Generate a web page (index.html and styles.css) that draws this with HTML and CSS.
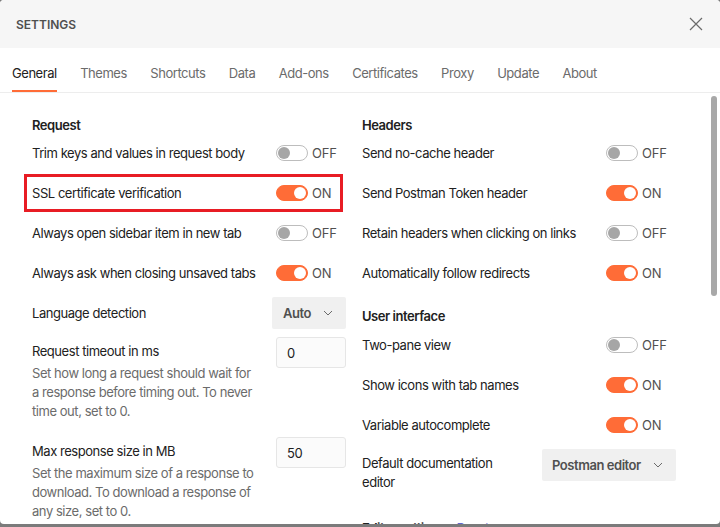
FILE: index.html
```html
<!DOCTYPE html>
<html>
<head>
<meta charset="utf-8">
<link rel="stylesheet" href="styles.css">
</head>
<body>
<div class="modal">
  <header class="header">
    <span class="title">SETTINGS</span>
    <svg class="close" width="14" height="14" viewBox="0 0 14 14"><path d="M1 1L13 13M13 1L1 13" stroke="#6b6b6b" stroke-width="1.2" fill="none"/></svg>
  </header>
  <nav class="tabs">
    <span class="tab active">General</span>
    <span class="tab">Themes</span>
    <span class="tab">Shortcuts</span>
    <span class="tab">Data</span>
    <span class="tab">Add-ons</span>
    <span class="tab">Certificates</span>
    <span class="tab">Proxy</span>
    <span class="tab">Update</span>
    <span class="tab">About</span>
  </nav>
  <div class="body">
    <div class="columns">
      <section class="col">
        <h3 class="heading">Request</h3>
        <div class="row"><span class="label">Trim keys and values in request body</span><span class="switch"><i class="toggle"></i>OFF</span></div>
        <div class="row highlighted"><span class="label">SSL certificate verification</span><span class="switch"><i class="toggle on"></i>ON</span><span class="annot"></span></div>
        <div class="row"><span class="label">Always open sidebar item in new tab</span><span class="switch"><i class="toggle"></i>OFF</span></div>
        <div class="row"><span class="label">Always ask when closing unsaved tabs</span><span class="switch"><i class="toggle on"></i>ON</span></div>
        <div class="row"><span class="label">Language detection</span><span class="select select-auto">Auto<svg width="10" height="6" viewBox="0 0 10 6"><path d="M1 1L5 5L9 1" stroke="#6b6b6b" stroke-width="1" fill="none"/></svg></span></div>
        <div class="field">
          <div class="field-text">
            <div class="field-label">Request timeout in ms</div>
            <div class="desc">Set how long a request should wait for a response before timing out. To never time out, set to 0.</div>
          </div>
          <span class="input">0</span>
        </div>
        <div class="field field-next">
          <div class="field-text">
            <div class="field-label">Max response size in MB</div>
            <div class="desc">Set the maximum size of a response to download. To download a response of any size, set to 0.</div>
          </div>
          <span class="input">50</span>
        </div>
      </section>
      <section class="col">
        <h3 class="heading">Headers</h3>
        <div class="row"><span class="label">Send no-cache header</span><span class="switch"><i class="toggle"></i>OFF</span></div>
        <div class="row"><span class="label">Send Postman Token header</span><span class="switch"><i class="toggle on"></i>ON</span></div>
        <div class="row"><span class="label">Retain headers when clicking on links</span><span class="switch"><i class="toggle"></i>OFF</span></div>
        <div class="row"><span class="label">Automatically follow redirects</span><span class="switch"><i class="toggle on"></i>ON</span></div>
        <h3 class="heading heading-ui">User interface</h3>
        <div class="row"><span class="label">Two-pane view</span><span class="switch"><i class="toggle"></i>OFF</span></div>
        <div class="row"><span class="label">Show icons with tab names</span><span class="switch"><i class="toggle on"></i>ON</span></div>
        <div class="row"><span class="label">Variable autocomplete</span><span class="switch"><i class="toggle on"></i>ON</span></div>
        <div class="field">
          <div class="field-label doc-label">Default documentation editor</div>
          <span class="select select-doc">Postman editor<svg width="10" height="6" viewBox="0 0 10 6"><path d="M1 1L5 5L9 1" stroke="#6b6b6b" stroke-width="1" fill="none"/></svg></span>
        </div>
        <h3 class="heading heading-editor">Editor settings <span class="reset">Reset</span></h3>
      </section>
    </div>
    <div class="scrollbar"></div>
  </div>
</div>
</body>
</html>
```

FILE: styles.css
```css
* { box-sizing: border-box; }
html, body { margin: 0; padding: 0; }
body {
  width: 720px;
  height: 527px;
  overflow: hidden;
  background: #7b7b7b;
  font-family: Inter, "Noto Sans", sans-serif;
  font-size: 13px;
  letter-spacing: -0.45px;
  color: #212121;
}
.modal {
  width: 720px;
  height: 524px;
  background: #ffffff;
  border-radius: 4px;
  overflow: hidden;
  display: flex;
  flex-direction: column;
}
.header {
  height: 48px;
  flex: none;
  background: #f6f6f6;
  display: flex;
  align-items: center;
  justify-content: space-between;
  padding: 0 17px 0 16px;
}
.title {
  font-size: 12px;
  font-weight: 600;
  color: #505050;
  letter-spacing: 0;
}
.close { display: block; }
.tabs {
  height: 45px;
  flex: none;
  display: flex;
  gap: 23.4px;
  padding: 0 12px;
  border-bottom: 1px solid #ededed;
}
.tab {
  display: flex;
  align-items: center;
  padding-top: 7px;
  color: #6b6b6b;
  border-bottom: 2px solid transparent;
}
.tab.active {
  color: #212121;
  border-bottom-color: #ff6c37;
}
.body {
  position: relative;
  flex: 1;
  overflow: hidden;
}
.columns {
  display: flex;
  gap: 16px;
  padding: 24px 32px 0;
}
.col {
  width: 314px;
  flex: none;
}
.heading {
  margin: 0;
  font-size: 13px;
  font-weight: 600;
  line-height: 16px;
  color: #212121;
}
.heading-ui { margin-top: 15px; margin-bottom: 1px; }
.heading-editor { margin-top: 28px; }
.reset {
  font-weight: 400;
  color: #6366d1;
  margin-left: 8px;
}
.row {
  position: relative;
  height: 40px;
  display: flex;
  align-items: center;
  justify-content: space-between;
}
.label { color: #212121; }
.switch {
  width: 70px;
  display: flex;
  align-items: center;
  gap: 4px;
  color: #505050;
  font-size: 13px;
  letter-spacing: -0.2px;
  margin-top: -1px;
}
.toggle {
  position: relative;
  width: 32px;
  height: 16px;
  border-radius: 8px;
  border: 1px solid #bdbdbd;
  background: #ffffff;
  flex: none;
}
.toggle::after {
  content: "";
  position: absolute;
  top: 1px;
  left: 1px;
  width: 12px;
  height: 12px;
  border-radius: 50%;
  background: #a6a6a6;
}
.toggle.on {
  background: #ff6c37;
  border-color: #ff6c37;
}
.toggle.on::after {
  left: auto;
  right: 1px;
  background: #ffffff;
}
.annot {
  position: absolute;
  top: 1px;
  bottom: 1px;
  left: -8px;
  right: 3px;
  border: 3px solid #e81c24;
  pointer-events: none;
}
.select {
  height: 32px;
  display: flex;
  align-items: center;
  justify-content: space-between;
  background: #f0f0f0;
  border-radius: 2px;
  font-weight: 600;
  color: #505050;
  padding: 0 13px 0 11px;
}
.select-auto { width: 74px; }
.select-doc { width: 134px; padding-left: 10px; padding-right: 13px; }
.field {
  display: flex;
  justify-content: space-between;
  align-items: flex-start;
  padding-top: 4px;
}
.field-next { margin-top: 12px; }
.field-text { width: 226px; padding-top: 4px; }
.field-label {
  line-height: 20px;
  color: #212121;
}
.desc {
  margin-top: 3px;
  line-height: 19px;
  color: #6b6b6b;
}
.input {
  width: 70px;
  height: 31px;
  border: 1px solid #e6e6e6;
  border-radius: 3px;
  background: #fbfbfb;
  display: flex;
  align-items: center;
  padding-left: 10px;
  color: #212121;
}
.doc-label {
  width: 160px;
  line-height: 19px;
  padding-top: 5px;
}
.scrollbar {
  position: absolute;
  top: 3px;
  right: 3px;
  width: 6px;
  height: 200px;
  border-radius: 3px;
  background: #a8a8a8;
}
```
